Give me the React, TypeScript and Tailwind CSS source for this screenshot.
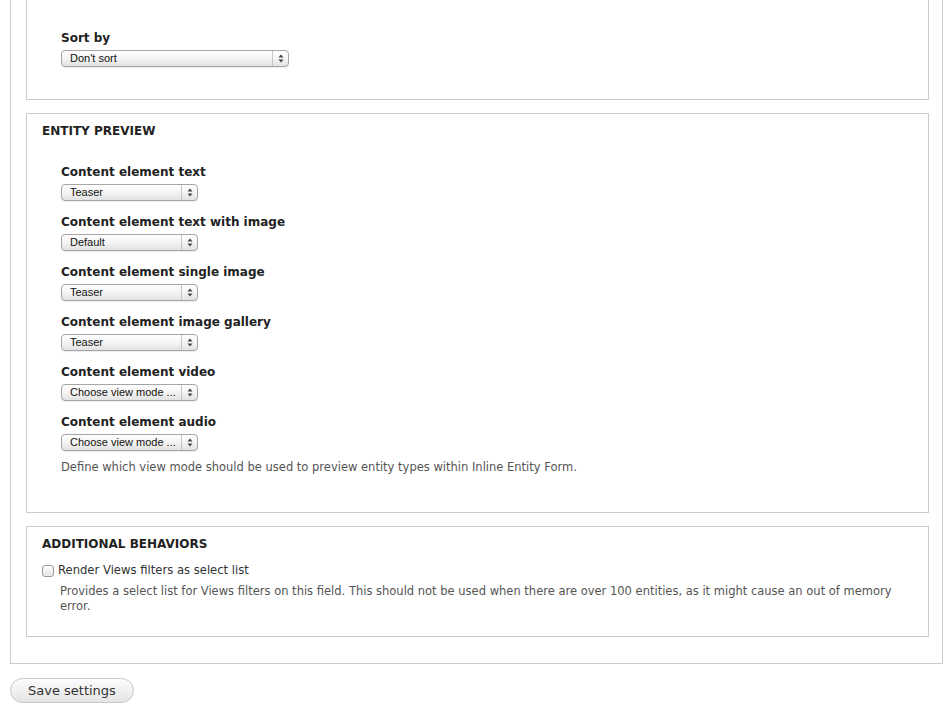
import React from 'react';

const ITEMS: { label: string; value: string }[] = [
    { label: 'Content element text', value: 'Teaser' },
    { label: 'Content element text with image', value: 'Default' },
    { label: 'Content element single image', value: 'Teaser' },
    { label: 'Content element image gallery', value: 'Teaser' },
    { label: 'Content element video', value: 'Choose view mode ...' },
    { label: 'Content element audio', value: 'Choose view mode ...' },
];

const font = 'font-["DejaVu_Sans",Verdana,sans-serif]';

// Mac-style select box drawn with divs so it renders the same everywhere
const FakeSelect: React.FC<{ value: string; width: string }> = ({ value, width }) => (
    <div
        className={`${width} h-[17px] flex items-stretch rounded-[4px] border border-[#a6a6a6] bg-gradient-to-b from-white via-[#f4f4f4] to-[#e2e2e2] shadow-[0_1px_1px_rgba(0,0,0,0.08)]`}
    >
        <span className='flex-1 pl-[8px] text-[11px] leading-[15px] text-[#111] font-["Liberation_Sans",Arial,sans-serif] truncate'>
            {value}
        </span>
        <span className="w-[16px] border-l border-[#c4c4c4] flex items-center justify-center">
            <svg width="6" height="9" viewBox="0 0 6 9">
                <path d="M3 0.5L5.5 3.5H0.5Z" fill="#444" />
                <path d="M3 8.5L5.5 5.5H0.5Z" fill="#444" />
            </svg>
        </span>
    </div>
);

export default function App() {
    return (
        <div className={`w-[951px] h-[710px] bg-white overflow-hidden ${font} text-[#333]`}>
            <div className="pl-[10px]">
                {/* Outer fieldset (top is scrolled off) */}
                <div className="w-[933px] border-x border-b border-[#cccccc] pl-[15px] pr-[13px] pb-[26px]">
                    {/* Sort fieldset */}
                    <div className="border-x border-b border-[#cccccc] pt-[31px] pb-[32px] pl-[34px]">
                        <div className="text-[12px] font-bold leading-[15px] text-[#222] mb-[4px]">Sort by</div>
                        <FakeSelect value="Don't sort" width="w-[228px]" />
                    </div>

                    {/* Entity preview */}
                    <div className="mt-[13px] border border-[#cccccc] pt-[10px] pb-[37px] pl-[15px]">
                        <div className="text-[12px] font-bold uppercase leading-[15px] text-[#222]">Entity preview</div>
                        <div className="pl-[19px] pt-[26px] flex flex-col gap-[14px]">
                            {ITEMS.map((item, i) => (
                                <div key={i}>
                                    <div className="text-[12px] font-bold leading-[15px] text-[#222] mb-[4px]">{item.label}</div>
                                    <FakeSelect value={item.value} width="w-[137px]" />
                                </div>
                            ))}
                        </div>
                        <p className="pl-[19px] mt-[9px] text-[11.5px] leading-[15px] text-[#555]">
                            Define which view mode should be used to preview entity types within Inline Entity Form.
                        </p>
                    </div>

                    {/* Additional behaviors */}
                    <div className="mt-[13px] border border-[#cccccc] pt-[10px] pb-[22px] pl-[15px] pr-[30px]">
                        <div className="text-[12px] font-bold uppercase leading-[15px] text-[#222]">Additional behaviors</div>
                        <label className="mt-[11px] flex items-center gap-[4px] text-[11.6px] leading-[15px] text-[#333]">
                            <span className="w-[12px] h-[12px] rounded-[3px] border border-[#9a9a9a] bg-gradient-to-b from-white to-[#e6e6e6]" />
                            Render Views filters as select list
                        </label>
                        <p className="mt-[6px] pl-[18px] text-[11.5px] leading-[15px] text-[#555]">
                            Provides a select list for Views filters on this field. This should not be used when there are over 100 entities, as it might cause an out of memory error.
                        </p>
                    </div>
                </div>

                <button className="mt-[14px] h-[25px] px-[17px] rounded-full border border-[#c8c8c8] bg-gradient-to-b from-[#fdfdfd] to-[#e4e4e4] text-[13px] text-[#333] leading-[23px]">
                    Save settings
                </button>
            </div>
        </div>
    );
}
